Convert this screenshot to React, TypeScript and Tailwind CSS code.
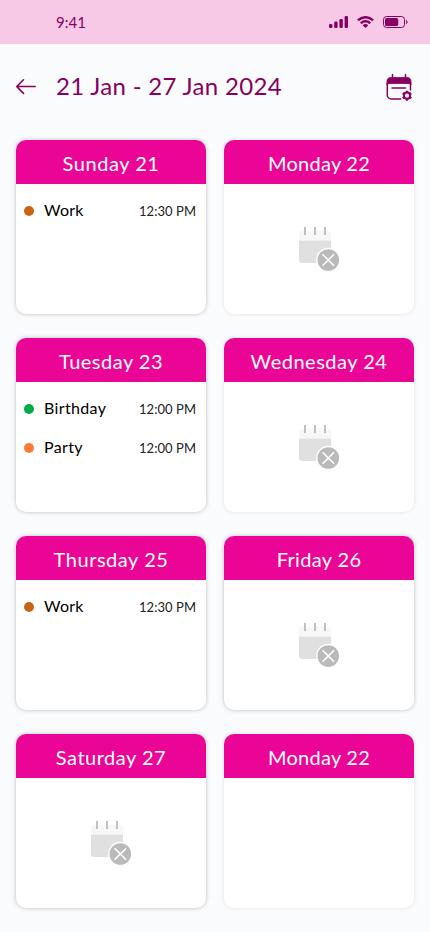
import clsx from "clsx";

type CalendarEvent = { name: string; time: string; dot: string; tracking: string };

type Day = {
  label: string;
  tracking: string;
  raised?: boolean;
  empty?: boolean;
  events?: CalendarEvent[];
};

const days: Day[] = [
  {
    label: "Sunday 21",
    tracking: "tracking-[0.55px]",
    raised: true,
    events: [
      { name: "Work", time: "12:30 PM", dot: "bg-[#c86414]", tracking: "tracking-[0.25px]" },
    ],
  },
  { label: "Monday 22", tracking: "tracking-[0.25px]", empty: true },
  {
    label: "Tuesday 23",
    tracking: "tracking-[0.5px]",
    raised: true,
    events: [
      { name: "Birthday", time: "12:00 PM", dot: "bg-[#00aa46]", tracking: "tracking-[0.35px]" },
      { name: "Party", time: "12:00 PM", dot: "bg-[#ff7a38]", tracking: "tracking-[0.35px]" },
    ],
  },
  { label: "Wednesday 24", tracking: "tracking-[0.5px]", empty: true },
  {
    label: "Thursday 25",
    tracking: "tracking-[0.55px]",
    raised: true,
    events: [
      { name: "Work", time: "12:30 PM", dot: "bg-[#c86414]", tracking: "tracking-[0.25px]" },
    ],
  },
  { label: "Friday 26", tracking: "tracking-[0.35px]", raised: true, empty: true },
  { label: "Saturday 27", tracking: "tracking-[0.5px]", raised: true, empty: true },
  { label: "Monday 22", tracking: "tracking-[0.25px]" },
];

function StatusBar() {
  return (
    <div className="flex h-11 items-center justify-between bg-[#f7c9e6] pl-14 pr-[22px]">
      <span className="pb-px text-[15px] leading-5">9:41</span>
      <div className="flex items-center">
        <svg width="20" height="12" viewBox="0 0 20 12" fill="currentColor">
          <rect x="0" y="8" width="3.4" height="4" rx="1.2" />
          <rect x="5.2" y="5.5" width="3.4" height="6.5" rx="1.2" />
          <rect x="10.4" y="3" width="3.4" height="9" rx="1.2" />
          <rect x="15.6" y="0" width="3.4" height="12" rx="1.2" />
        </svg>
        <svg className="ml-2" width="17" height="12" viewBox="0 0 17 12" fill="currentColor">
          <path d="M8.5 2.5c2.4 0 4.7.9 6.4 2.6.1.1.3.1.5 0l1.3-1.3c.1-.1.1-.4 0-.5a11.8 11.8 0 0 0-16.4 0c-.1.1-.1.4 0 .5l1.3 1.3c.2.1.4.1.5 0A9.2 9.2 0 0 1 8.5 2.5Z" />
          <path d="M8.5 6.6c1.3 0 2.6.5 3.5 1.4.2.1.4.1.5 0l1.3-1.3c.2-.2.2-.4 0-.5a7.7 7.7 0 0 0-10.6 0c-.2.1-.2.3 0 .5l1.3 1.3c.1.1.3.1.5 0 .9-.9 2.2-1.4 3.5-1.4Z" />
          <path d="M11.1 9.4c.1-.1.1-.3 0-.4a4 4 0 0 0-5.2 0c-.1.1-.1.3 0 .4l2.3 2.3c.2.2.4.2.6 0Z" />
        </svg>
        <svg className="ml-[9px]" width="25" height="12" viewBox="0 0 25 12" fill="none">
          <rect x="0.5" y="0.5" width="21" height="11" rx="3" stroke="currentColor" />
          <rect x="2" y="2" width="13.2" height="8" rx="1.5" fill="currentColor" />
          <path d="M23.2 4v4c.8-.3 1.3-1.1 1.3-2s-.5-1.7-1.3-2Z" fill="currentColor" />
        </svg>
      </div>
    </div>
  );
}

function BackIcon() {
  return (
    <svg
      width="20"
      height="16"
      viewBox="0 0 20 16"
      fill="none"
      stroke="currentColor"
      strokeWidth="1.5"
      strokeLinecap="round"
      strokeLinejoin="round"
    >
      <path d="M19.2 7.6H.8M7.5.8.8 7.6l6.7 6.8" />
    </svg>
  );
}

function CalendarSettingsIcon() {
  return (
    <svg width="28" height="28" viewBox="0 0 28 28" fill="none" stroke="currentColor">
      <path d="M6.5.4v4M19.5.4v4" strokeWidth="1.5" strokeLinecap="round" />
      <path
        d="M1 11V7.5A3.5 3.5 0 0 1 4.500 3.600h17A3.500 3.500 0 0 1 25 7.500V11Q24.500 9.500 22 9.500H4Q1.500 9.500 1 11Z"
        fill="currentColor"
        strokeWidth=".8"
      />
      <path
        d="M1.300 9v12a4 4 0 0 0 4 4h9.400M24.500 9v7"
        strokeWidth="1.5"
        strokeLinecap="round"
      />
      <path d="M6 14h13.500" strokeWidth="1.5" strokeLinecap="round" />
      <circle cx="21" cy="21.700" r="3.100" strokeWidth="2" />
      <path
        d="M21 16.700v1.500M21 25.200v1.500M16.700 19.200l1.200.7M24.100 23.500l1.200.7M16.700 24.200l1.200-.7M24.100 19.900l1.200-.7"
        strokeWidth="2.4"
      />
    </svg>
  );
}

function NoEventsIcon() {
  return (
    <svg width="42" height="46" viewBox="0 0 42 46" fill="none">
      <path d="M0 13.500h32V33a3 3 0 0 1-3 3H3a3 3 0 0 1-3-3Z" fill="#e0e0e0" />
      <path d="M0 13V7a3 3 0 0 1 3-3h26a3 3 0 0 1 3 3v6Z" fill="#f7f7f7" />
      <path d="M6 0v8M16 0v8M26 0v8" stroke="#bababa" strokeWidth="1.8" />
      <circle cx="29.300" cy="33" r="11.500" fill="#bababa" stroke="white" strokeWidth="1.4" />
      <path
        d="m24 27.700 10.600 10.600m0-10.600L24 38.300"
        stroke="white"
        strokeWidth="1.6"
        strokeLinecap="round"
      />
    </svg>
  );
}

function EventRow({ name, time, dot, tracking }: CalendarEvent) {
  return (
    <li className="flex h-[23px] items-center pl-2 pr-2.5">
      <span className={clsx("size-2.5 rounded-full", dot)} />
      <span className={clsx("ml-2.5 pb-px text-base text-black", tracking)}>{name}</span>
      <span className="ml-auto pt-0.5 text-[13px] tracking-[0.05px] text-[#222]">{time}</span>
    </li>
  );
}

function DayCard({ label, tracking, raised, empty, events }: Day) {
  return (
    <section
      className={clsx(
        "flex h-[174px] flex-col overflow-hidden rounded-[10px] bg-white",
        raised
          ? "shadow-[0_0_4px_rgba(0,0,0,0.25)]"
          : "shadow-[0_0_4px_rgba(0,0,0,0.1)]",
      )}
    >
      <h2
        className={clsx(
          "flex h-11 shrink-0 items-center justify-center bg-[#eb0596] pt-px text-xl text-white",
          tracking,
        )}
      >
        {label}
      </h2>
      {events && (
        <ul className="flex flex-col gap-4 pt-[15px]">
          {events.map((event) => (
            <EventRow key={event.name} {...event} />
          ))}
        </ul>
      )}
      {empty && (
        <div className="flex flex-1 items-center justify-center pl-0.5 pt-0.5">
          <NoEventsIcon />
        </div>
      )}
    </section>
  );
}

export default function App() {
  return (
    <div className="h-[932px] w-[430px] overflow-hidden bg-[#fafbfd] font-['Lato',sans-serif] text-[#87005f]">
      <StatusBar />
      <header className="flex h-24 items-center pb-2.5 pl-4 pr-4">
        <button type="button" aria-label="Back">
          <BackIcon />
        </button>
        <h1 className="ml-5 pb-0.5 text-2xl tracking-[0.32px]">21 Jan - 27 Jan 2024</h1>
        <button type="button" aria-label="Calendar settings" className="ml-auto pt-0.5">
          <CalendarSettingsIcon />
        </button>
      </header>
      <main className="grid grid-cols-2 gap-x-[18px] gap-y-6 px-4">
        {days.map((day, i) => (
          <DayCard key={i} {...day} />
        ))}
      </main>
    </div>
  );
}
